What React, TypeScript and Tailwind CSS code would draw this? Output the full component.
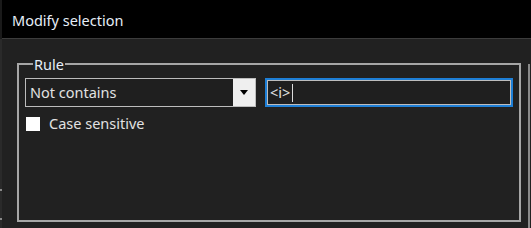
export default function App() {
  return (
    <div
      className="flex h-[228px] w-[531px] overflow-hidden bg-[#212121] text-[#dcdcdc]"
      style={{ fontFamily: '"Noto Sans", "Open Sans", sans-serif' }}
    >
      {/* sliver of the window behind */}
      <div className="flex w-[3px] flex-col bg-[#2a2a2a]">
        <div className="h-[39px] bg-[#1a1a1a]" />
        <div className="mt-[150px] h-[2px] bg-[#8a8a8a]" />
        <div className="mt-[27px] h-[2px] bg-[#8a8a8a]" />
      </div>

      <div className="flex flex-1 flex-col">
        <div className="flex h-[39px] items-center border-b border-[#3c3c3c] bg-black pt-[3px] pl-[10px] text-[14.5px] text-[#e6eef8]">
          Modify selection
        </div>

        <div className="flex flex-1">
          <fieldset className="mt-[16px] mb-[6px] ml-[15px] flex-1 border-2 border-[#a6a6a6] px-[6px] pt-[5px]">
            <legend className="ml-[8px] px-[1px] text-[14.5px] leading-[18px] text-[#e6eef8]">Rule</legend>

            <div className="flex items-center gap-[9px]">
              <div className="flex h-[29px] w-[231px] border border-[#bdbdbd] bg-[#1f1f1f]">
                <div className="flex flex-1 items-center pl-[4px] text-[14.5px] text-[#e2e2e2]">Not contains</div>
                <div className="flex w-[22px] items-center justify-center bg-[#efefef]">
                  <svg width="8" height="5" viewBox="0 0 8 5">
                    <path d="M0 0h8L4 5z" fill="#000" />
                  </svg>
                </div>
              </div>

              <div className="flex h-[29px] w-[248px] items-center border-[2px] border-[#1e7fd6] bg-[#1f1f1f]">
                <div className="flex h-full w-full items-center border border-[#bdbdbd] pl-[2px] text-[14.5px] text-[#e2e2e2]">
                  &lt;i&gt;
                  <span className="ml-[2px] h-[18px] w-px bg-[#dcdcdc]" />
                </div>
              </div>
            </div>

            <label className="mt-[6px] flex items-center gap-[9px] pl-[1px] text-[14.5px] text-[#e2e2e2]">
              <span className="h-[14px] w-[14px] bg-white" />
              Case sensitive
            </label>
          </fieldset>
          <div className="mt-[25px] ml-[7px] w-[2px] self-stretch bg-[#8a8a8a]" />
          <div className="w-[1px]" />
        </div>
      </div>
    </div>
  );
}
